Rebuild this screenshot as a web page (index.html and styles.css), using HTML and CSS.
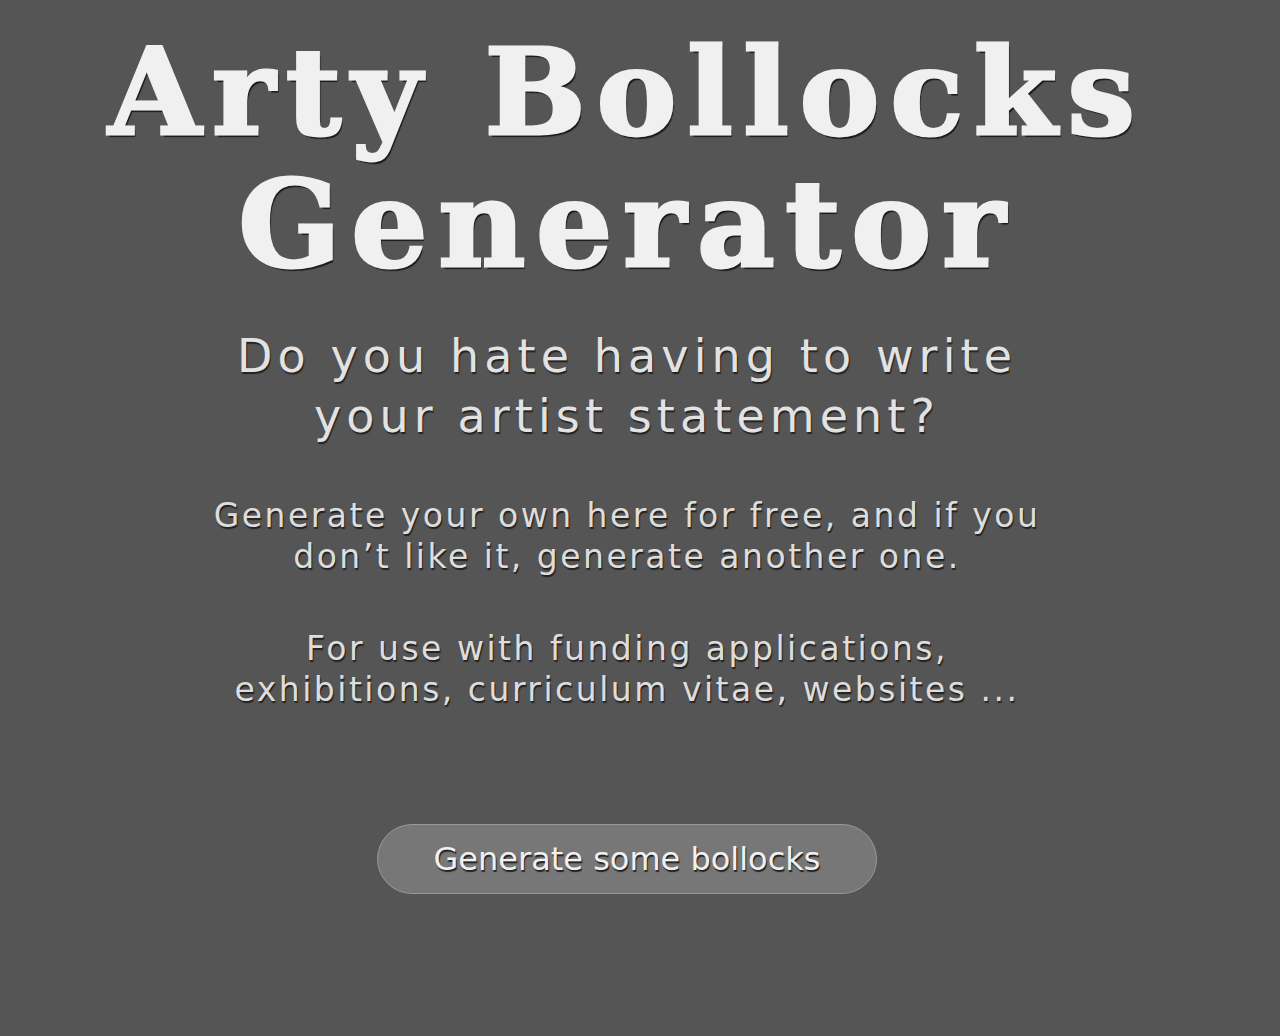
FILE: index.html
```html
<!DOCTYPE html>
<html lang="en">
<head>
    <meta charset="UTF-8">
    <meta name="viewport" content="width=device-width, initial-scale=1.0">
    <title>Arty Bollocks Generator</title>
    <link rel="stylesheet" href="styles.css">
</head>
<body>

<div class="page">
    <h1 class="title">Arty Bollocks<br>Generator</h1>

    <h2 class="lead">Do you hate having to write<br>your artist statement?</h2>

    <p class="intro">Generate your own here for free, and if you<br>don&#8217;t like it, generate another one.</p>

    <p class="intro">For use with funding applications,<br>exhibitions, curriculum vitae, websites ...</p>

    <form class="generate" action="#" method="post">
        <button type="button" class="btn">Generate some bollocks</button>
    </form>
</div>

</body>
</html>
```

FILE: styles.css
```css
body {
    margin: 0;
    background-color: #555555;
    color: #EEEEEE;
    font-family: "DejaVu Sans", "Open Sans", Arial, sans-serif;
}

.page {
    display: flex;
    flex-direction: column;
    align-items: center;
    text-align: center;
    padding: 26px 26px 0 0;
}

.title {
    margin: 0;
    font-family: "DejaVu Serif", "Liberation Serif", serif;
    font-size: 120px;
    font-weight: 700;
    line-height: 132px;
    letter-spacing: 10.6px;
    color: #F0F0F0;
    -webkit-text-stroke: 3px #F0F0F0;
    text-shadow: 2px 3px 1px #1A1A1A;
}

.lead {
    margin: 36px 0 0;
    font-size: 46px;
    font-weight: 400;
    line-height: 60px;
    letter-spacing: 5.1px;
    color: #E2E2E2;
    text-shadow: 1px 2px 1px #222222;
}

.intro {
    margin: 49px 0 0;
    font-size: 33px;
    line-height: 41px;
    letter-spacing: 2.5px;
    color: #DDDDDD;
    text-shadow: 1px 2px 1px #222222;
}

.intro + .intro {
    margin-top: 51px;
}

.generate {
    margin-top: 114px;
}

.btn {
    width: 500px;
    height: 70px;
    border: 1px solid #999999;
    border-radius: 35px;
    background-color: #777777;
    color: #F0F0F0;
    font-family: "DejaVu Sans", "Open Sans", Arial, sans-serif;
    font-size: 32px;
    text-shadow: 1px 2px 1px #222222;
    cursor: pointer;
}
```
